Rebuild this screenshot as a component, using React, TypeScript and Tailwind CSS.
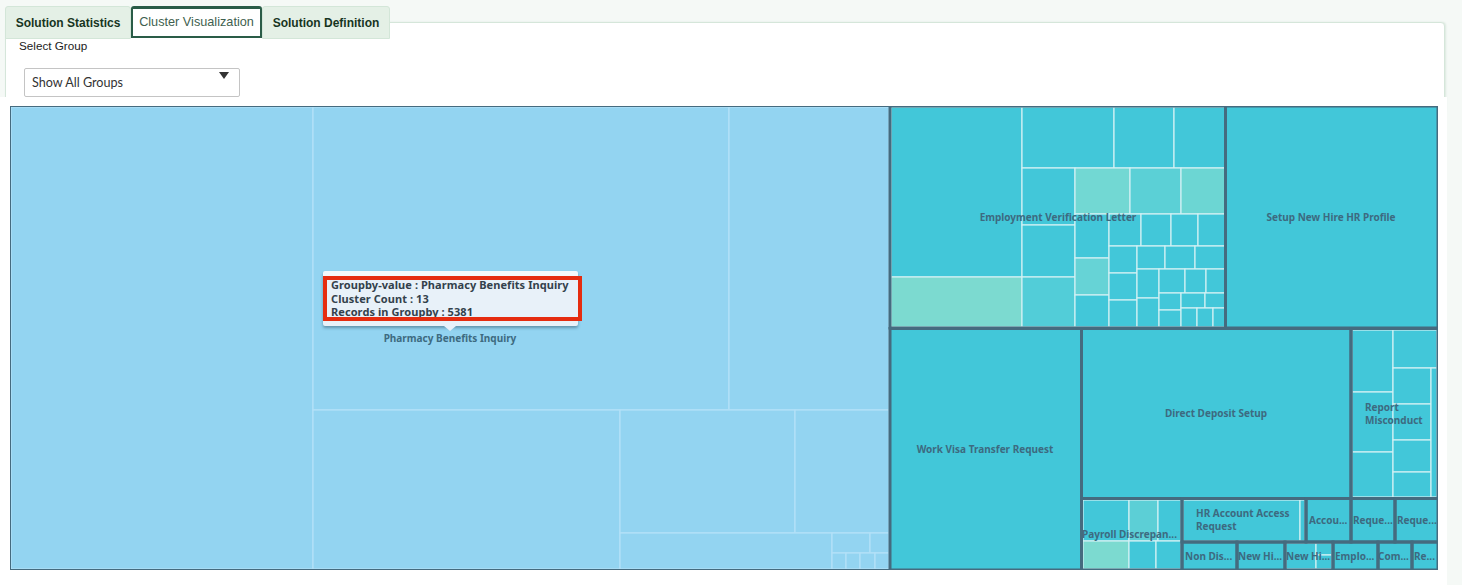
type Cell = { x0: number; y0: number; x1: number; y1: number; fill?: string };
type Label = { x: number; y: number; text: string; anchor?: "middle" | "start" };

const BLUE = "#93d4f1";
const TEAL = "#42c7d9";

function c(x0: number, y0: number, x1: number, y1: number, fill?: string): Cell {
  return { x0, y0, x1, y1, fill };
}

const blueCells: Cell[] = [
  c(11, 107, 313, 569),
  c(313, 107, 729, 410),
  c(729, 107, 889, 410),
  c(313, 410, 620, 569),
  c(620, 410, 795, 533),
  c(795, 410, 889, 533),
  c(620, 533, 832, 569),
  c(832, 533, 870, 553),
  c(870, 533, 889, 553),
  c(832, 553, 846, 569),
  c(846, 553, 860, 569),
  c(860, 553, 875, 569),
  c(875, 553, 889, 569),
];

const tealCells: Cell[] = [
  // Employment Verification Letter
  c(891, 107, 1022, 277),
  c(891, 277, 1022, 327, "#7cdad0"),
  c(1022, 107, 1114, 168),
  c(1114, 107, 1174, 168),
  c(1174, 107, 1225, 168),
  c(1022, 168, 1075, 225),
  c(1022, 225, 1075, 277),
  c(1022, 277, 1075, 327, "#52cdd8"),
  c(1075, 168, 1130, 214, "#72d8d3"),
  c(1130, 168, 1181, 214, "#5bd0d6"),
  c(1181, 168, 1225, 214, "#6cd6d3"),
  c(1075, 214, 1109, 258),
  c(1075, 258, 1109, 295, "#66d3d6"),
  c(1075, 295, 1109, 327),
  c(1109, 214, 1141, 246),
  c(1141, 214, 1171, 246),
  c(1171, 214, 1198, 246),
  c(1198, 214, 1225, 246),
  c(1109, 246, 1137, 273),
  c(1109, 273, 1137, 300),
  c(1109, 300, 1137, 327),
  c(1137, 246, 1165, 269),
  c(1165, 246, 1195, 269),
  c(1195, 246, 1225, 269),
  c(1137, 269, 1159, 298),
  c(1137, 298, 1159, 327),
  c(1159, 269, 1185, 293),
  c(1185, 269, 1206, 293),
  c(1206, 269, 1225, 293),
  c(1159, 293, 1181, 310),
  c(1159, 310, 1181, 327),
  c(1181, 293, 1205, 308),
  c(1205, 293, 1225, 308),
  c(1181, 308, 1197, 327),
  c(1197, 308, 1213, 327),
  c(1213, 308, 1225, 327),
  // Report Misconduct
  c(1352, 330, 1393, 392),
  c(1352, 392, 1393, 452),
  c(1352, 452, 1393, 497),
  c(1393, 330, 1437, 368),
  c(1393, 368, 1431, 404),
  c(1393, 404, 1431, 440),
  c(1393, 440, 1431, 472),
  c(1393, 472, 1431, 497),
  c(1431, 368, 1437, 497),
  // Payroll Discrepancy
  c(1083, 500, 1129, 541),
  c(1083, 541, 1129, 569, "#7cdad0"),
  c(1129, 500, 1158, 541, "#5ccfd6"),
  c(1158, 500, 1181, 541),
  c(1129, 541, 1156, 569),
  c(1156, 541, 1181, 569),
  // small ones
  c(1183, 500, 1300, 541),
  c(1300, 500, 1305, 541),
  c(1286, 543, 1316, 569),
  c(1316, 543, 1332, 555),
  c(1316, 555, 1332, 569),
];

const groupBorders: Cell[] = [
  c(890, 106, 1225.5, 328),
  c(1225.5, 106, 1438, 328),
  c(890, 328.5, 1081.5, 570),
  c(1081.5, 328.5, 1351, 498.5),
  c(1351, 328.5, 1438, 498.5),
  c(1081.5, 498.5, 1182, 570),
  c(1182, 498.5, 1306, 542),
  c(1306, 498.5, 1351, 542),
  c(1351, 498.5, 1395, 542),
  c(1395, 498.5, 1438, 542),
  c(1182, 542, 1237, 570),
  c(1237, 542, 1285, 570),
  c(1285, 542, 1333, 570),
  c(1333, 542, 1378, 570),
  c(1378, 542, 1412, 570),
  c(1412, 542, 1438, 570),
];

const labels: Label[] = [
  { x: 450, y: 342, text: "Pharmacy Benefits Inquiry" },
  { x: 1058, y: 221, text: "Employment Verification Letter" },
  { x: 1331, y: 221, text: "Setup New Hire HR Profile" },
  { x: 985, y: 453, text: "Work Visa Transfer Request" },
  { x: 1216, y: 417, text: "Direct Deposit Setup" },
  { x: 1365, y: 411, text: "Report", anchor: "start" },
  { x: 1365, y: 424, text: "Misconduct", anchor: "start" },
  { x: 1082, y: 538, text: "Payroll Discrepan...", anchor: "start" },
  { x: 1196, y: 517, text: "HR Account Access", anchor: "start" },
  { x: 1196, y: 530, text: "Request", anchor: "start" },
  { x: 1309, y: 524, text: "Accou...", anchor: "start" },
  { x: 1353, y: 524, text: "Reque...", anchor: "start" },
  { x: 1397, y: 524, text: "Reque...", anchor: "start" },
  { x: 1185, y: 560, text: "Non Dis...", anchor: "start" },
  { x: 1238, y: 560, text: "New Hi...", anchor: "start" },
  { x: 1286, y: 560, text: "New Hi...", anchor: "start" },
  { x: 1335, y: 560, text: "Emplo...", anchor: "start" },
  { x: 1378, y: 560, text: "Com...", anchor: "start" },
  { x: 1414, y: 560, text: "Re...", anchor: "start" },
];

function Treemap() {
  return (
    <svg width={1447} height={488} viewBox="0 97 1447 488" className="block">
      <defs>
        <clipPath id="chart-area">
          <rect x={10} y={106} width={1428} height={464} />
        </clipPath>
      </defs>
      <rect x={10.5} y={106.5} width={879} height={463} fill={BLUE} />
      {blueCells.map((cell, i) => (
        <rect
          key={i}
          x={cell.x0}
          y={cell.y0}
          width={cell.x1 - cell.x0}
          height={cell.y1 - cell.y0}
          fill={BLUE}
          stroke="#b3e1f7"
          strokeWidth={1.3}
        />
      ))}
      <rect x={890} y={106.5} width={548} height={463} fill={TEAL} />
      {tealCells.map((cell, i) => (
        <rect
          key={i}
          x={cell.x0}
          y={cell.y0}
          width={cell.x1 - cell.x0}
          height={cell.y1 - cell.y0}
          fill={cell.fill ?? TEAL}
          stroke="#d2f1f3"
          strokeWidth={1.2}
        />
      ))}
      <g clipPath="url(#chart-area)">
        {groupBorders.map((cell, i) => (
          <rect
            key={i}
            x={cell.x0}
            y={cell.y0}
            width={cell.x1 - cell.x0}
            height={cell.y1 - cell.y0}
            fill="none"
            stroke="#456b7f"
            strokeWidth={3}
          />
        ))}
      </g>
      <rect x={10.5} y={106.5} width={1427} height={463} fill="none" stroke="#456b7f" />
      {labels.map((label, i) => (
        <text
          key={i}
          x={label.x}
          y={label.y}
          textAnchor={label.anchor ?? "middle"}
          fill="#3d6a80"
          className="font-['Noto_Sans',sans-serif] text-[10px] font-bold"
        >
          {label.text}
        </text>
      ))}
    </svg>
  );
}

function Tab({ label, active, wide }: { label: string; active?: boolean; wide?: boolean }) {
  if (active) {
    return (
      <div className="w-[131px] h-[32px] flex items-center justify-center bg-white border-2 border-t-[3px] border-[#2a5c47] rounded-t-[3px] text-[12.7px] text-[#3f5f4f]">
        {label}
      </div>
    );
  }
  return (
    <div className={(wide ? "w-[128px]" : "w-[126px]") + " h-[33px] flex items-center justify-center bg-[#e4f0e6] border border-[#d3e6d8] rounded-t-[3px] text-[12px] font-bold text-[#17351f]"}>
      {label}
    </div>
  );
}

export default function App() {
  return (
    <div className="relative w-[1462px] h-[585px] overflow-hidden bg-[#f5f9f6] font-['Liberation_Sans',sans-serif]">
      {/* TOP PANEL */}
      <div className="relative h-[97px] pt-[6px] pl-[5px]">
        <div className="absolute left-[5px] top-[22px] w-[1440px] h-[90px] bg-white border border-[#d5e6da] rounded-t-[4px] shadow-[1px_0_2px_#dbe8df]" />
        <div className="relative flex items-start">
          <Tab label="Solution Statistics" />
          <Tab label="Cluster Visualization" active />
          <Tab label="Solution Definition" wide />
        </div>
        <div className="relative pl-[14px] text-[11.7px] leading-[14px] text-[#222]">Select Group</div>
        <div className="relative mt-[15px] ml-[19px] w-[216px] h-[29px] flex items-center justify-between pl-[7px] pr-[10px] bg-white border border-[#c4c4c4] rounded-[2px] font-['Lato',sans-serif] text-[12.6px] text-[#333]">
          <span className="mt-[1px]">Show All Groups</span>
          <span className="self-start mt-[3px] w-0 h-0 border-x-[5px] border-x-transparent border-t-[7px] border-t-[#333]" />
        </div>
      </div>

      {/* CHART */}
      <div className="relative w-[1447px] h-[488px] bg-white">
        <Treemap />
      </div>

      {/* TOOLTIP */}
      <div className="absolute left-[323px] top-[271px] w-[255px] h-[55px] bg-[#e8f1f9] rounded-[2px] border-t-[5px] border-t-[#f4f8fb] shadow-[0_2px_3px_rgba(40,70,90,0.45)] pl-[8px] pt-[2px] font-['Noto_Sans',sans-serif] text-[11px] leading-[13.5px] font-bold tracking-[0.07px] whitespace-nowrap text-[#33414c]">
        <div>Groupby-value : Pharmacy Benefits Inquiry</div>
        <div>Cluster Count : 13</div>
        <div>Records in Groupby : 5381</div>
        <div className="absolute left-[121px] top-[50px] w-0 h-0 border-x-[6px] border-x-transparent border-t-[5px] border-t-[#e8f1f9]" />
      </div>
      <div className="absolute left-[323px] top-[276px] w-[259px] h-[45px] border-[4px] border-[#e52c10]" />
    </div>
  );
}
